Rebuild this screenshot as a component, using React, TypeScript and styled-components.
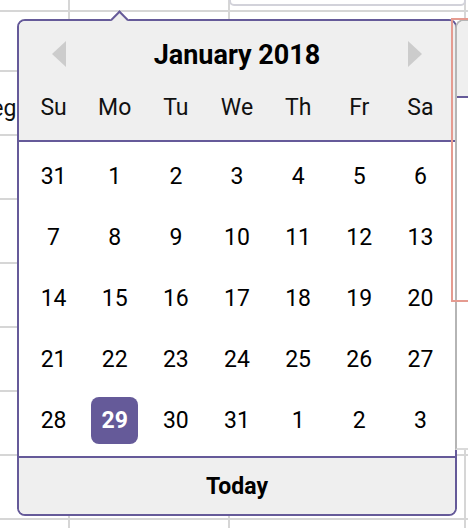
import React from 'react';
import styled, { createGlobalStyle } from 'styled-components';

const GlobalStyle = createGlobalStyle`
  html, body {
    margin: 0;
    padding: 0;
    background: #ffffff;
    overflow: hidden;
  }
  body {
    font-family: Roboto, "Liberation Sans", Arial, sans-serif;
    color: #111111;
  }
  * {
    box-sizing: border-box;
  }
`;

const PURPLE = '#655a99';
const PANEL = '#efefef';
const GRID = '#d6d6d6';

const Page = styled.div`
  position: relative;
  width: 468px;
  height: 528px;
  overflow: hidden;
`;

const Sheet = styled.div`
  display: grid;
  grid-template-columns: 70px 160px 236px 1fr;
  grid-template-rows: 8px repeat(8, 64px) 1fr;
  width: 468px;
  height: 528px;
`;

const Cell = styled.div<{ $last: boolean }>`
  border-bottom: 2px solid ${GRID};
  border-right: ${p => (p.$last ? 'none' : `2px solid ${GRID}`)};
  overflow: hidden;
  white-space: nowrap;
  display: flex;
  align-items: center;
  padding-top: 10px;
  font-size: 23px;
  color: #111;
`;

const CellText = styled.span`
  margin-left: -23px;
`;

const CellEditor = styled.div`
  position: absolute;
  left: 229px;
  top: -30px;
  width: 237px;
  height: 36px;
  background: #fff;
  border: 2px solid #d2d2da;
  border-radius: 5px;
`;

const SidePanel = styled.div`
  position: absolute;
  left: 455px;
  top: 19px;
  width: 40px;
  height: 431px;
  background: #fff;
  border-left: 2px solid #b5b5b5;
  border-top: 2px solid #b5b5b5;
  border-bottom: 2px solid #dadada;
  border-top-left-radius: 9px;
  overflow: hidden;
`;

const SideHeader = styled.div`
  height: 77px;
  background: ${PANEL};
  border-bottom: 2px solid ${PURPLE};
`;

const FocusOutline = styled.div`
  position: absolute;
  left: 451px;
  top: 18px;
  width: 40px;
  height: 284px;
  border: 2px solid #e59b90;
  pointer-events: none;
`;

const Popup = styled.div`
  position: absolute;
  left: 17px;
  top: 19px;
  width: 440px;
  height: 497px;
  border: 2px solid ${PURPLE};
  border-radius: 8px;
  background: #fff;
  display: flex;
  flex-direction: column;
`;

const Caret = styled.span`
  position: absolute;
  left: 93.5px;
  top: -8.5px;
  width: 13px;
  height: 13px;
  background: ${PANEL};
  border-top: 2px solid ${PURPLE};
  border-left: 2px solid ${PURPLE};
  transform: rotate(45deg);
  z-index: 2;
`;

const Header = styled.div`
  background: ${PANEL};
  border-bottom: 2px solid ${PURPLE};
  border-radius: 6px 6px 0 0;
`;

const TitleRow = styled.div`
  height: 68px;
  display: flex;
  align-items: center;
  justify-content: space-between;
  padding: 0 33px;
`;

const Arrow = styled.span<{ $dir: 'left' | 'right' }>`
  width: 0;
  height: 0;
  margin-top: -3px;
  border-top: 13.5px solid transparent;
  border-bottom: 13.5px solid transparent;
  ${p =>
    p.$dir === 'left'
      ? 'border-right: 14px solid #cccccc;'
      : 'border-left: 14px solid #cccccc;'}
`;

const Title = styled.div`
  font-size: 27px;
  font-weight: 700;
  color: #000;
`;

const WeekRow = styled.div`
  display: grid;
  grid-template-columns: repeat(7, 1fr);
  padding: 5px 4px 18px;
  line-height: 28px;
  font-size: 23px;
  text-align: center;
`;

const Body = styled.div`
  flex: 1;
  display: grid;
  grid-template-columns: repeat(7, 1fr);
  grid-auto-rows: 61px;
  padding: 4px 4px 0;
`;

const Day = styled.div<{ $selected?: boolean }>`
  display: flex;
  align-items: center;
  justify-content: center;
  font-size: 23px;
  color: #000;
  span {
    width: 47px;
    height: 47px;
    display: flex;
    align-items: center;
    justify-content: center;
    border-radius: 8px;
    background: ${p => (p.$selected ? PURPLE : 'transparent')};
    color: ${p => (p.$selected ? '#fff' : '#000')};
    font-weight: ${p => (p.$selected ? 700 : 400)};
  }
`;

const Footer = styled.div`
  height: 58px;
  background: ${PANEL};
  border-top: 2px solid ${PURPLE};
  border-radius: 0 0 6px 6px;
  display: flex;
  align-items: center;
  justify-content: center;
  font-size: 23px;
  font-weight: 700;
  color: #000;
`;

const weekDays = ['Su', 'Mo', 'Tu', 'We', 'Th', 'Fr', 'Sa'];

const days = [
  31, 1, 2, 3, 4, 5, 6,
  7, 8, 9, 10, 11, 12, 13,
  14, 15, 16, 17, 18, 19, 20,
  21, 22, 23, 24, 25, 26, 27,
  28, 29, 30, 31, 1, 2, 3
];

export default function App() {
  const cells = [];
  for (let r = 0; r < 10; r++) {
    for (let c = 0; c < 4; c++) {
      cells.push(
        <Cell key={`${r}-${c}`} $last={c === 3}>
          {r === 2 && c === 0 ? <CellText>Beg</CellText> : null}
        </Cell>
      );
    }
  }

  return (
    <Page>
      <GlobalStyle />
      <Sheet>{cells}</Sheet>
      <CellEditor />
      <Popup>
        <Caret />
        <Header>
          <TitleRow>
            <Arrow $dir="left" />
            <Title>January 2018</Title>
            <Arrow $dir="right" />
          </TitleRow>
          <WeekRow>
            {weekDays.map(d => (
              <div key={d}>{d}</div>
            ))}
          </WeekRow>
        </Header>
        <Body>
          {days.map((d, i) => (
            <Day key={i} $selected={i === 29}>
              <span>{d}</span>
            </Day>
          ))}
        </Body>
        <Footer>Today</Footer>
      </Popup>
      <SidePanel>
        <SideHeader />
      </SidePanel>
      <FocusOutline />
    </Page>
  );
}
